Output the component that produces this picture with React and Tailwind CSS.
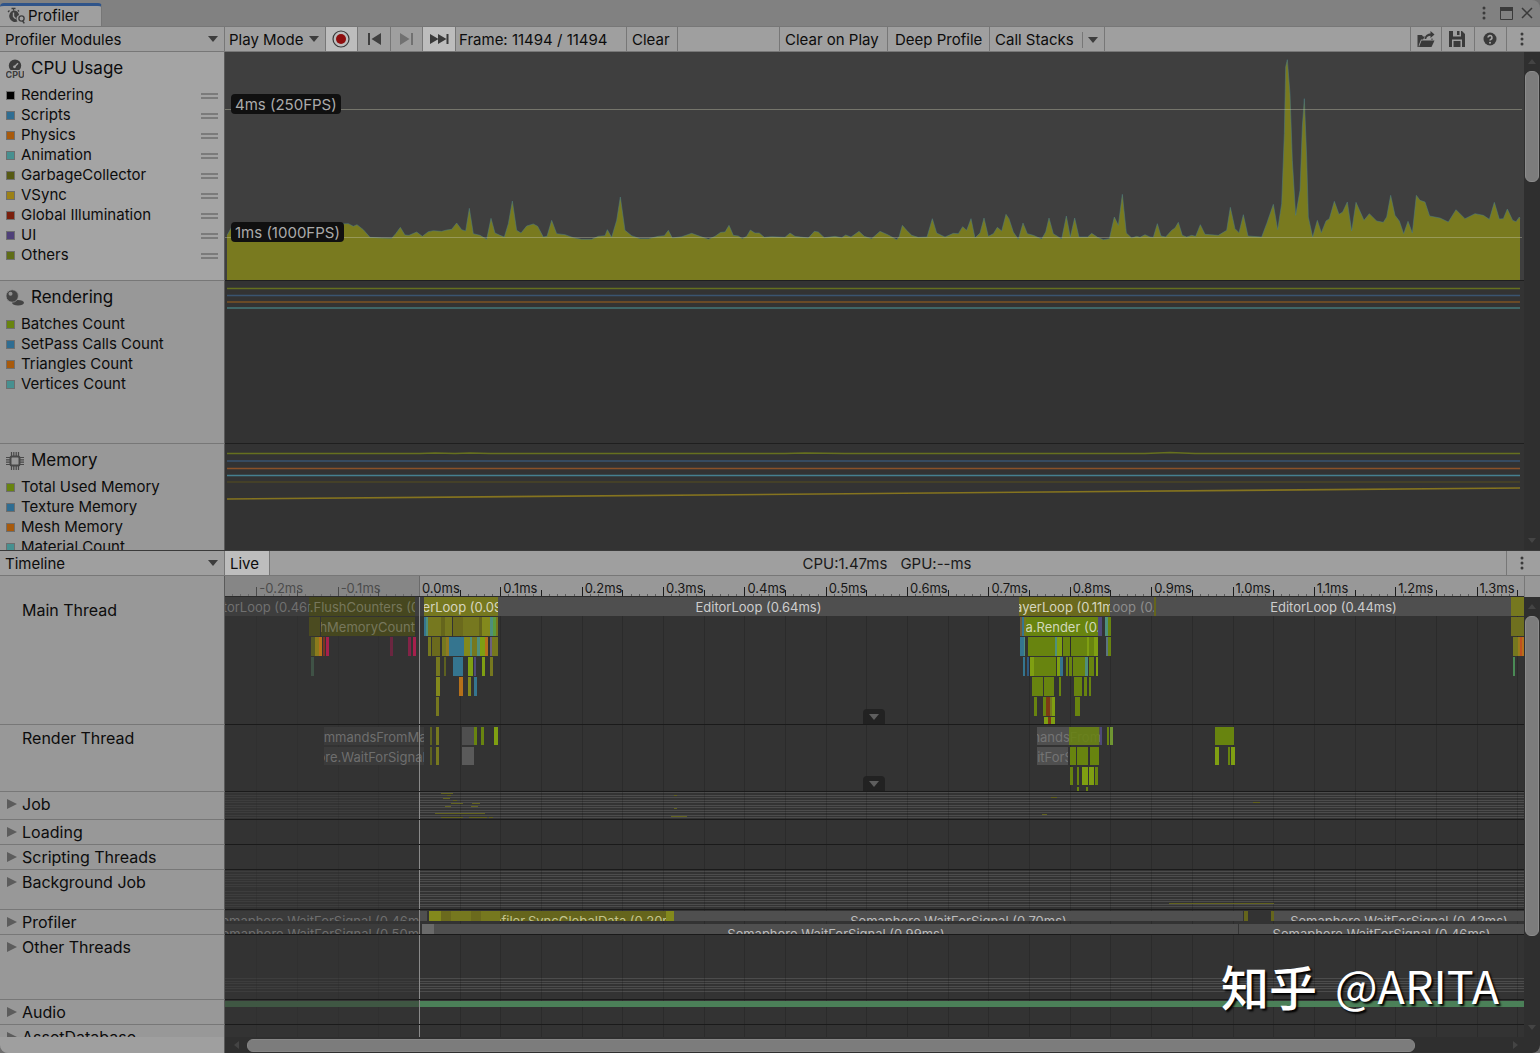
import React from 'react';

const LANE_WIDTH = 1299;
const MS_STEP = 81.35;
const ZERO = 194;

const pct = (value) => `${(value / LANE_WIDTH) * 100}%`;

const C = {
  olive: '#76781f',
  oliveLight: '#83891c',
  oliveDim: '#46471f',
  green: '#68840f',
  lime: '#7f9f12',
  blue: '#35758f',
  teal: '#4f8f7c',
  orange: '#b5701a',
  red: '#7d3a15',
  pink: '#a6204c',
  pinkDim: '#6b2640',
  purple: '#4f4a78',
  gray: '#4f4f4f',
  grayLight: '#5a5a5a',
  grayDim: '#3e3e3e',
};

const cpuLegend = [
  ['Rendering', '#000000'],
  ['Scripts', '#2f6d92'],
  ['Physics', '#a85a0c'],
  ['Animation', '#479090'],
  ['GarbageCollector', '#565a14'],
  ['VSync', '#9c8116'],
  ['Global Illumination', '#7a1f0d'],
  ['UI', '#4f4079'],
  ['Others', '#5f6d17'],
];

const renderingLegend = [
  ['Batches Count', '#68840f'],
  ['SetPass Calls Count', '#2f6d92'],
  ['Triangles Count', '#a85a0c'],
  ['Vertices Count', '#479090'],
];

const memoryLegend = [
  ['Total Used Memory', '#68840f'],
  ['Texture Memory', '#2f6d92'],
  ['Mesh Memory', '#a85a0c'],
  ['Material Count', '#479090'],
];

// Frame times, three units per pixel
const move = (points, dx, dy) => points.map(([x, y]) => [x + dx, y + dy]);

const samples = [
  ...move([
    [6, 165], [20, 140], [100, 136], [370, 130], [385, 138], [396, 133], [415, 148], [435, 171], [470, 173], [500, 174],
    [512, 160], [526, 141], [540, 164], [552, 165], [575, 155], [592, 168], [610, 154], [625, 151], [650, 153], [665, 149],
    [680, 147], [695, 128], [710, 148], [722, 152], [733, 84], [745, 160], [765, 165], [785, 177], [798, 114], [810, 158],
    [825, 165], [838, 170], [850, 130], [862, 62], [875, 150], [888, 158], [905, 137], [925, 131], [938, 138], [955, 170],
    [966, 168], [980, 120], [995, 160], [1020, 163], [1045, 172], [1070, 177], [1100, 177], [1120, 168], [1140, 166],
    [1147, 148], [1160, 171], [1175, 120], [1186, 50], [1200, 150], [1220, 166], [1245, 175], [1270, 175], [1300, 168],
    [1318, 166], [1330, 150], [1342, 173], [1370, 169], [1400, 159], [1425, 168], [1450, 177], [1470, 168], [1487, 156],
  ], 0, 385),
  ...move([
    [0, 155], [12, 135], [25, 165], [40, 167], [52, 175], [65, 168], [76, 149], [90, 158], [103, 158], [118, 171],
    [140, 169], [180, 171], [195, 158], [210, 168], [250, 173], [268, 153], [280, 155], [298, 172], [330, 168], [350, 172],
    [362, 164], [378, 170], [402, 153], [418, 168], [440, 175], [465, 153], [490, 164], [515, 178], [522, 170], [532, 135],
    [545, 150], [560, 165], [580, 171], [606, 170], [622, 115], [635, 158], [660, 170], [685, 159], [700, 160], [713, 139],
    [725, 150], [738, 115], [750, 173], [765, 158], [777, 113], [790, 168], [805, 160], [817, 141], [830, 152], [843, 102],
    [852, 115], [865, 155], [880, 177], [894, 128], [907, 160], [925, 165], [950, 176], [962, 155], [972, 113], [985, 160],
    [1010, 176], [1024, 107], [1036, 170], [1049, 113], [1062, 170], [1088, 170], [1100, 159], [1118, 171], [1135, 178],
    [1153, 175], [1168, 110], [1180, 135], [1192, 42], [1204, 158], [1220, 173], [1235, 168], [1245, 171], [1260, 163],
    [1275, 170], [1285, 171], [1297, 130], [1308, 167], [1322, 170], [1340, 150], [1350, 143], [1360, 126], [1372, 165],
    [1385, 170], [1400, 165], [1412, 168], [1426, 133], [1440, 162], [1480, 165],
  ], 1500, 385),
  ...move([
    [410, 690], [421, 621], [435, 685], [447, 697], [460, 643], [474, 707], [515, 710], [530, 670], [550, 612], [563, 688],
    [575, 610], [583, 400], [587, 200], [592, 178], [600, 280], [607, 480], [617, 645], [630, 570], [637, 380], [643, 295],
    [650, 470], [655, 650], [668, 710], [682, 660], [694, 697], [708, 662], [718, 655], [733, 603], [747, 642], [758, 635],
    [772, 605], [785, 692], [798, 606], [822, 660], [838, 640], [860, 662], [880, 666], [890, 650], [902, 585], [915, 645],
    [928, 662], [941, 700], [954, 663], [967, 698], [979, 585], [990, 600], [1005, 605], [1019, 647], [1050, 653],
    [1075, 665], [1098, 628], [1125, 655], [1155, 640], [1180, 645], [1198, 657], [1213, 606], [1228, 656], [1240, 655],
    [1252, 626], [1268, 660], [1278, 664], [1288, 650], [1290, 655],
  ], 2595, -155),
];

const cpuLine = samples.map((p) => p.join(',')).join(' ');

// [row, start, end, color, label, label color]
const mainBars = [
  [0, 0, 84, C.grayDim, 'EditorLoop (0.46ms)', '#707070'],
  [0, 84, 190, C.oliveDim, 'Profiler.FlushCounters (0.13ms)', '#77775c'],
  [0, 190, 199, C.grayDim],
  [0, 199, 273, C.olive, 'PlayerLoop (0.09ms)', '#d6d6c0'],
  [0, 273, 794, C.gray, 'EditorLoop (0.64ms)', '#cdcdcd'],
  [0, 794, 885, '#6b6a1d', 'PlayerLoop (0.11ms)', '#d6d6c0'],
  [0, 885, 929, C.gray, 'EditorLoop (0.05ms)', '#8c8c8c'],
  [0, 929, 931, '#65651c'],
  [0, 931, 1286, C.gray, 'EditorLoop (0.44ms)', '#cdcdcd'],
  [0, 1286, 1299, C.olive],
  [1, 84, 95, '#4b4b20'],
  [1, 96, 190, C.oliveDim, 'Profiler.FlushMemoryCounters (0.12ms)', '#77775c'],
  [1, 199, 201, C.blue], [1, 201, 203, C.teal], [1, 203, 216, C.olive], [1, 216, 220, '#65651c'], [1, 220, 227, C.olive],
  [1, 228, 238, '#6b6a1d'], [1, 238, 254, C.olive], [1, 254, 257, '#65651c'], [1, 257, 265, C.oliveLight],
  [1, 265, 268, C.teal], [1, 268, 271, '#5c9a3c'], [1, 271, 273, C.olive],
  [1, 795, 797, '#6f5b3a'], [1, 797, 799, C.blue], [1, 799, 801, C.olive],
  [1, 801, 873, C.green, 'Camera.Render (0.09ms)', '#d2d8bb'],
  [1, 873, 877, C.purple], [1, 880, 883, C.teal], [1, 883, 886, C.green],
  [1, 1286, 1299, '#6f701f'],
  [2, 86, 90, '#555a24'], [2, 90, 94, '#8a7a1c'], [2, 94, 97, C.orange], [2, 98, 100, '#7d3322'], [2, 101, 104, C.pink],
  [2, 165, 168, C.pinkDim], [2, 183, 186, '#832347'], [2, 188, 191, C.pink],
  [2, 203, 206, C.olive], [2, 207, 215, '#6b6a1d'], [2, 217, 221, C.olive], [2, 221, 224, '#8f7a22'], [2, 224, 239, C.blue],
  [2, 239, 245, C.oliveLight], [2, 245, 247, C.teal], [2, 247, 252, C.olive], [2, 252, 255, C.teal],
  [2, 255, 260, C.lime], [2, 260, 263, C.orange], [2, 265, 267, '#6c5f80'], [2, 267, 270, C.olive], [2, 270, 273, C.olive],
  [2, 795, 799, C.blue], [2, 799, 800, C.teal], [2, 803, 830, C.green], [2, 830, 832, C.teal], [2, 832, 837, C.lime],
  [2, 838, 845, C.green], [2, 846, 862, C.green], [2, 862, 864, C.lime], [2, 864, 869, C.green], [2, 869, 873, C.lime],
  [2, 881, 883, '#5a7480'], [2, 883, 886, C.green],
  [2, 1288, 1293, C.olive], [2, 1293, 1295, '#9a7a1c'], [2, 1295, 1297, '#c0501f'], [2, 1297, 1299, C.orange],
  [3, 86, 89, '#3f5246'],
  [3, 211, 215, C.olive], [3, 219, 221, '#5d6120'], [3, 228, 238, C.blue], [3, 243, 248, C.lime], [3, 249, 251, C.purple],
  [3, 257, 260, C.lime], [3, 265, 268, C.olive],
  [3, 798, 800, C.blue], [3, 802, 804, '#2f5a80'], [3, 805, 809, C.lime], [3, 809, 831, C.green], [3, 832, 835, C.lime],
  [3, 835, 838, C.blue], [3, 841, 843, C.green], [3, 844, 847, C.green], [3, 848, 860, C.green], [3, 860, 863, C.teal],
  [3, 864, 869, C.green], [3, 871, 873, C.lime],
  [3, 1288, 1290, '#4a8a55'],
  [4, 211, 215, C.oliveLight], [4, 234, 238, C.orange], [4, 243, 246, C.oliveLight], [4, 249, 252, C.blue],
  [4, 807, 818, C.green], [4, 819, 829, C.green], [4, 834, 836, C.green], [4, 849, 857, C.green], [4, 859, 862, C.green],
  [4, 864, 866, C.green],
  [5, 211, 214, C.olive],
  [5, 809, 812, C.green], [5, 818, 821, C.green], [5, 821, 825, C.red], [5, 825, 827, C.olive], [5, 827, 830, C.lime],
  [5, 850, 855, C.green],
  [6, 819, 823, C.lime], [6, 823, 826, C.red], [6, 826, 830, C.lime],
];

const renderBars = [
  [0, 99, 199, '#3b3b3b', 'Gfx.WaitForGfxCommandsFromMainThread (0.12ms)', '#6e6e6e'],
  [1, 99, 199, '#3b3b3b', 'Semaphore.WaitForSignal (0.12ms)', '#6e6e6e'],
  [0, 205, 207, '#5d6120'], [0, 211, 214, C.olive], [0, 237, 249, C.gray], [0, 249, 252, C.green],
  [0, 256, 259, C.green], [0, 269, 273, C.lime],
  [1, 205, 207, '#5d6120'], [1, 211, 214, C.olive], [1, 237, 249, C.grayLight],
  [0, 812, 877, C.gray, 'Gfx.WaitForGfxCommandsFromMainThread (0.08ms)', '#747474'],
  [0, 844, 874, '#68840fd9'], [0, 875, 877, C.purple], [0, 882, 884, C.green], [0, 885, 888, '#6f9632'],
  [1, 812, 843, C.gray, 'Semaphore.WaitForSignal (0.04ms)', '#747474'],
  [1, 845, 851, C.green], [1, 852, 863, C.green], [1, 865, 874, C.green],
  [2, 845, 848, C.green], [2, 852, 854, C.green], [2, 857, 863, C.lime], [2, 864, 869, C.lime], [2, 870, 873, C.green],
  [3, 852, 854, C.green], [3, 861, 863, C.green],
  [0, 990, 1009, C.green], [1, 990, 994, C.lime], [1, 1003, 1005, C.green], [1, 1006, 1010, C.lime],
];

const profilerBars = [
  [0, 0, 194, '#3b3b3b', 'Semaphore.WaitForSignal (0.46ms)', '#6e6e6e'],
  [0, 194, 202, C.gray],
  [0, 204, 216, C.oliveLight], [0, 216, 226, '#6b6a1d'], [0, 226, 246, C.olive], [0, 246, 256, '#6b6a1d'],
  [0, 256, 275, C.olive],
  [0, 275, 441, '#65651c', 'Profiler.SyncGlobalData (0.20ms)', '#c4c48e'],
  [0, 441, 449, C.oliveLight],
  [0, 449, 1018, C.gray, 'Semaphore.WaitForSignal (0.70ms)', '#bdbdbd'],
  [0, 1019, 1023, '#65651c'], [0, 1046, 1049, '#65651c'],
  [0, 1049, 1299, C.gray, 'Semaphore.WaitForSignal (0.42ms)', '#bdbdbd'],
  [1, 0, 194, '#3b3b3b', 'Semaphore.WaitForSignal (0.50ms)', '#6e6e6e'],
  [1, 197, 209, '#6a6a6a'],
  [1, 209, 1013, C.gray, 'Semaphore.WaitForSignal (0.99ms)', '#bdbdbd'],
  [1, 1014, 1299, C.gray, 'Semaphore.WaitForSignal (0.46ms)', '#bdbdbd'],
];

// [top, start, end]
const jobMarks = [
  [1, 216, 228], [3, 222, 226], [6, 218, 225], [8, 228, 232], [11, 226, 238], [11, 247, 255], [14, 220, 226], [14, 246, 253],
  [21, 210, 260], [25, 216, 238], [25, 244, 262], [25, 264, 268], [3, 449, 452], [16, 449, 452], [24, 446, 462],
  [5, 826, 832], [10, 1028, 1035], [22, 817, 822],
];

const ticks = [];
for (let i = -23; i <= 135; i++) ticks.push(i);
const gridTicks = ticks.filter((i) => i % 5 === 0);
const labelTicks = ticks.filter((i) => i % 10 === 0);

const Arrow = ({ className = '' }) => (
  <svg viewBox="0 0 10 6" className={`h-[6px] w-[10px] fill-[#3d3d3d] ${className}`}>
    <path d="M0 0h10L5 6z" />
  </svg>
);

const Dots = () => (
  <svg viewBox="0 0 4 14" className="h-[14px] w-[4px] fill-[#3a3a3a]">
    <circle cx="2" cy="2" r="1.5" />
    <circle cx="2" cy="7" r="1.5" />
    <circle cx="2" cy="12" r="1.5" />
  </svg>
);

const ProfilerIcon = () => (
  <svg viewBox="0 0 18 18" className="h-[18px] w-[18px]">
    <path d="M4.5 .8h4v1.4h-4zM6 2h1v1.500H6z" fill="#3f3f3f" />
    <path d="M6.5 3.200a6 6 0 0 1 5.600 4.800A4 4 0 0 0 10.500 14.500a6 6 0 1 1-4-11.300z" fill="#3f3f3f" />
    <path d="M6.500 5.500v4l2.200 2.200" fill="none" stroke="#a0a0a0" strokeWidth="1.400" />
    <path d="M1 5l1.500-1.500M10.800 3.200l1.300 1.300" stroke="#3f3f3f" strokeWidth="1.300" />
    <circle cx="14.500" cy="11.500" r="2.600" fill="none" stroke="#3f3f3f" strokeWidth="1.400" />
    <path d="M15.500 13.800l1.800 2.600" stroke="#3f3f3f" strokeWidth="1.500" />
  </svg>
);

const CpuIcon = () => (
  <svg viewBox="0 0 18 20" className="h-[20px] w-[18px]">
    <path d="M4.600 11a6.200 6.200 0 1 1 8.800 0z" fill="#3d3d3d" />
    <path d="M8.500 7.800L12 4.200" stroke="#a4a4a4" strokeWidth="1.400" />
    <circle cx="8.500" cy="7.800" r="1.400" fill="#a4a4a4" />
    <text x="9" y="19" textAnchor="middle" fontSize="9" fontWeight="700" fill="#3d3d3d">CPU</text>
  </svg>
);

const RenderingIcon = () => (
  <svg viewBox="0 0 18 18" className="h-[18px] w-[18px]">
    <ellipse cx="12" cy="13.800" rx="6" ry="2.800" fill="#444444" />
    <circle cx="6.200" cy="7" r="6.200" fill="#444444" stroke="#989898" strokeWidth=".8" />
    <circle cx="4.500" cy="4.800" r="2" fill="#909090" />
  </svg>
);

const MemoryIcon = () => (
  <svg viewBox="0 0 18 18" className="h-[18px] w-[18px]" fill="none" stroke="#484848">
    <rect x="4.500" y="4.500" width="9" height="9" rx="1.500" strokeWidth="2" />
    <path d="M5.500 0v4M7.800 0v4M10.200 0v4M12.500 0v4M5.500 14v4M7.800 14v4M10.200 14v4M12.500 14v4M0 5.500h4M0 7.800h4M0 10.200h4M0 12.500h4M14 5.500h4M14 7.800h4M14 10.200h4M14 12.500h4" strokeWidth="1.200" />
  </svg>
);

const ToolButton = ({ label, active, className = '', children }) => (
  <button
    aria-label={label}
    className={`flex h-full shrink-0 items-center justify-center border-r border-[#777777] ${active ? 'bg-[#bdbdbd]' : ''} ${className}`}
  >
    {children}
  </button>
);

const TextButton = ({ active, className = '', children }) => (
  <button className={`flex h-full shrink-0 items-center border-r border-[#777777] pt-[2px] pl-[5px] whitespace-nowrap ${active ? 'bg-[#bdbdbd]' : ''} ${className}`}>
    {children}
  </button>
);

const Dropdown = ({ label, value, arrow = 'right-[6px]', className }) => (
  <div className={`relative flex h-full shrink-0 items-center ${className}`}>
    <select aria-label={label} className="h-full w-full appearance-none pt-[2px] outline-none">
      <option>{value}</option>
    </select>
    <Arrow className={`pointer-events-none absolute ${arrow}`} />
  </div>
);

const Module = ({ title, icon, legend, handles, className = '', children }) => (
  <section className={`flex shrink-0 ${className}`}>
    <div className={`w-[225px] shrink-0 border-r border-b border-r-[#5a5a5a] border-b-[#777777] ${handles ? 'bg-[#a4a4a4]' : 'bg-[#989898]'}`}>
      <h2 className="flex h-[33px] items-center gap-[7px] pl-[6px] text-[17px] text-[#0c0c0c]">
        {icon}
        {title}
      </h2>
      <ul>
        {legend.map(([name, color]) => (
          <li key={name} className="flex h-5 items-center justify-between pr-[6px]">
            <button className="flex items-center gap-[6px] pl-[6px]">
              <span className="h-[9px] w-[9px] border border-[#6e6e6e]" style={{ backgroundColor: color }} />
              {name}
            </button>
            {handles && <span className="mt-[2px] h-[6px] w-[17px] border-y-2 border-[#7b7b7b]" />}
          </li>
        ))}
      </ul>
    </div>
    <div className={`relative min-w-0 flex-1 border-b border-[#1f1f1f] ${handles ? 'bg-[#3f3f3f]' : 'bg-[#333333]'}`}>
      {children}
    </div>
  </section>
);

const FlatLines = ({ lines, children }) => (
  <svg viewBox="0 0 1299 100" preserveAspectRatio="none" className="block h-[100px] w-full">
    {lines.map(([y, color]) => (
      <path key={y} d={`M2 ${y}H1295`} stroke={color} strokeWidth="1.6" />
    ))}
    {children}
  </svg>
);

const Scrollbar = ({ thumb }) => (
  <div className="flex w-[16px] shrink-0 flex-col items-center bg-[#2f2f2f] py-[7px]">
    <svg viewBox="0 0 8 5" className="h-[5px] w-[8px] shrink-0 fill-[#444444]"><path d="M0 5h8L4 0z" /></svg>
    <div className={`mt-[7px] w-[14px] shrink-0 rounded-md border border-[#8c8c8c] bg-[#7c7c7c] ${thumb}`} />
    <svg viewBox="0 0 8 5" className="mt-auto h-[5px] w-[8px] shrink-0 fill-[#444444]"><path d="M0 0h8L4 5z" /></svg>
  </div>
);

const Bars = ({ bars, top = 0, pitch = 20, height = 'h-[19px]' }) =>
  bars.map(([row, start, end, color, label, labelColor]) => (
    <div
      key={`${row}-${start}`}
      className={`absolute flex justify-center overflow-hidden text-[13px] leading-[21px] whitespace-nowrap ${height}`}
      style={{ top: top + row * pitch, left: pct(start), width: pct(end - start), backgroundColor: color, color: labelColor }}
    >
      {label && <span className="shrink-0">{label}</span>}
    </div>
  ));

const Stripes = ({ className }) => (
  <div className={`absolute inset-x-0 bg-[repeating-linear-gradient(to_bottom,#4c4c4c_0px,#4c4c4c_1px,#333333_1px,#333333_3px,#4c4c4c_3px,#4c4c4c_4px,#333333_4px,#333333_5px)] ${className}`} />
);

const Track = ({ name, foldout, className, stripes, more, children }) => (
  <div className={`flex shrink-0 ${className}`}>
    <div className="w-[225px] shrink-0 overflow-hidden border-r border-b border-r-[#5a5a5a] border-b-[#777777] bg-[#989898] text-[16px] text-[#0c0c0c]">
      {foldout ? (
        <button className="flex h-[24px] items-center gap-[5px] pl-[7px]">
          <svg viewBox="0 0 10 10" className="h-[10px] w-[10px] fill-[#5c5c5c]"><path d="M0 0v10l10-5z" /></svg>
          {name}
        </button>
      ) : (
        <div className="flex h-[25px] items-center pl-[22px]">{name}</div>
      )}
    </div>
    <div className="relative min-w-0 flex-1 overflow-hidden border-b border-[#1a1a1a] bg-[#333333]">
      {stripes}
      {gridTicks.map((i) => (
        <div key={i} className="absolute inset-y-0 w-px bg-black/15" style={{ left: pct(ZERO + (i * MS_STEP) / 10) }} />
      ))}
      <div className="absolute inset-y-0 left-0 bg-[#333333]/60" style={{ width: pct(194) }} />
      {children}
      <div className="absolute inset-y-0 w-px bg-[#8a8a8a]" style={{ left: pct(194) }} />
      {more && (
        <button aria-label={`Expand ${name}`} className="absolute bottom-0 left-1/2 -ml-[12px] flex h-[15px] w-[22px] items-center justify-center rounded-t-sm bg-[#222222]">
          <svg viewBox="0 0 10 6" className="h-[6px] w-[10px] fill-[#5e5e5e]"><path d="M0 0h10L5 6z" /></svg>
        </button>
      )}
    </div>
  </div>
);

const Ruler = () => (
  <div className="flex h-[21px] shrink-0 bg-[#989898]">
    <div className="w-[225px] shrink-0 border-r border-[#5a5a5a]" />
    <div className="relative min-w-0 flex-1 overflow-hidden border-b border-[#2b2b2b] text-[13px] text-[#161616]">
      <div className="absolute inset-y-0 left-0 bg-[#868686]" style={{ width: pct(194) }} />
      {ticks.map((i) => (
        <div
          key={i}
          className={`absolute bottom-0 w-px ${i < 0 ? 'bg-[#4a4a4a]' : 'bg-[#1c1c1c]'} ${i % 10 === 0 ? 'h-[9px]' : i % 5 === 0 ? 'h-[6px]' : 'h-[2px] opacity-50'}`}
          style={{ left: pct(ZERO + (i * MS_STEP) / 10) }}
        />
      ))}
      {labelTicks.map((i) => (
        <span
          key={i}
          className={`absolute top-[3px] pl-[3px] leading-[18px] ${i < 0 ? 'text-[#4c4c4c]' : ''}`}
          style={{ left: pct(ZERO + (i * MS_STEP) / 10) }}
        >
          {(i / 100).toFixed(1)}ms
        </span>
      ))}
      <div className="absolute inset-y-0 w-px bg-[#6a6a6a]" style={{ left: pct(194) }} />
    </div>
    <div className="w-[16px] shrink-0 border-l border-[#777777]" />
  </div>
);

const App = () => {
  return (
    <div className="h-screen bg-[#6f6f6f] font-['Inter','Liberation_Sans',sans-serif] text-[15px] text-[#0c0c0c]">
      <div className="relative flex h-full w-full flex-col overflow-hidden rounded-b-lg rounded-tr-lg bg-[#818181]">
        <header className="flex h-[26px] shrink-0 items-end justify-between">
          <div className="flex h-[23px] w-[102px] items-center gap-[3px] rounded-t-sm border-t-[3px] border-r border-t-[#2f548a] border-r-[#777777] bg-[#9f9f9f] pl-[7px]">
            <ProfilerIcon />
            Profiler
          </div>
          <div className="flex h-full items-center gap-[8px] pr-[7px]">
            <button aria-label="Window menu" className="mr-[6px]"><Dots /></button>
            <button aria-label="Maximize">
              <svg viewBox="0 0 13 13" className="h-[13px] w-[13px]"><path d="M.5 1h12v11.500H.5z" fill="none" stroke="#3a3a3a" /><path d="M0 0h13v4H0z" fill="#3a3a3a" /></svg>
            </button>
            <button aria-label="Close">
              <svg viewBox="0 0 12 12" className="h-[12px] w-[12px]" stroke="#3a3a3a" strokeWidth="1.5"><path d="M1 1l10 10M11 1L1 11" /></svg>
            </button>
          </div>
        </header>

        <div className="flex h-[26px] shrink-0 items-center border-y border-[#777777] bg-[#9f9f9f]">
          <Dropdown label="Profiler modules" value="Profiler Modules" className="w-[225px] border-r border-[#777777] pl-[5px]" />
          <Dropdown label="Target" value="Play Mode" className="w-[101px] border-r border-[#777777] pl-[4px]" />
          <ToolButton label="Record" active className="w-[32px] pr-[1px]">
            <svg viewBox="0 0 18 18" className="h-[18px] w-[18px]"><circle cx="9" cy="9" r="8" fill="none" stroke="#3a3a3a" strokeWidth="1.2" /><circle cx="9" cy="9" r="5" fill="#8f0d0d" /></svg>
          </ToolButton>
          <ToolButton label="Previous frame" className="w-[33px]">
            <svg viewBox="0 0 13 12" className="h-[12px] w-[13px] fill-[#3f3f3f]"><path d="M0 0h2v12H0zM13 0v12L3.500 6z" /></svg>
          </ToolButton>
          <ToolButton label="Next frame" className="w-[32px]">
            <svg viewBox="0 0 13 12" className="h-[12px] w-[13px] fill-[#717171]"><path d="M11 0h2v12h-2zM0 0v12l9.500-6z" /></svg>
          </ToolButton>
          <ToolButton label="Current frame" active className="w-[33px]">
            <svg viewBox="0 0 19 10" className="h-[10px] w-[19px] fill-[#3a3a3a]"><path d="M0 0v10l8.500-5zM8 0v10l8.500-5zM16.500 0h2v10h-2z" /></svg>
          </ToolButton>
          <div className="flex h-full w-[171px] shrink-0 items-center border-r border-[#777777] pt-[2px] pl-[3px]">Frame: 11494 / 11494</div>
          <TextButton className="w-[51px]">Clear</TextButton>
          <div className="h-full w-[102px] shrink-0 border-r border-[#777777]" />
          <TextButton className="w-[108px]">Clear on Play</TextButton>
          <TextButton className="w-[102px]"><span className="pl-[2px]">Deep Profile</span></TextButton>
          <TextButton className="w-[115px]">
            <span className="flex-1 text-left">Call Stacks</span>
            <span className="flex h-[16px] items-center border-l border-[#777777] pr-[6px] pl-[5px]"><Arrow /></span>
          </TextButton>
          <div className="h-full flex-1 border-r border-[#777777]" />
          <ToolButton label="Load" className="w-[31px]">
            <svg viewBox="0 0 18 18" className="h-[18px] w-[18px]" fill="#3a3a3a">
              <path d="M.5 5H5l1 1.500h2L6 9.500H4L1.800 15v2H.5z" />
              <path d="M4.500 10.500h13L14.500 17H2z" />
              <path d="M7.500 9c.5-4 3.500-5.500 6-5.500V1L17.500 4.500 13.500 8V5.700c-2 0-3.800 1-4.300 3.300z" />
              <path d="M14.500 8.500h1V10h-1z" />
            </svg>
          </ToolButton>
          <ToolButton label="Save" className="w-[33px] pr-[2px]">
            <svg viewBox="0 0 16 16" className="h-[16px] w-[16px]" fill="#3a3a3a">
              <path fillRule="evenodd" d="M0 0h13l3 3v13H0zM4 0v5.500h8V0h-1.500v4H8V0zM3 8.500V16h10V8.500z" />
              <path d="M4.500 10h7v6h-7z" />
            </svg>
          </ToolButton>
          <ToolButton label="Help" className="w-[32px] pr-[2px]">
            <svg viewBox="0 0 14 14" className="h-[14px] w-[14px]">
              <circle cx="7" cy="7" r="6.500" fill="#3a3a3a" />
              <path d="M5 5.600a2 2 0 1 1 2.800 1.800c-.6.3-.8.600-.8 1.200" fill="none" stroke="#a8a8a8" strokeWidth="1.600" />
              <circle cx="7" cy="10.700" r="1" fill="#a8a8a8" />
            </svg>
          </ToolButton>
          <button aria-label="Options" className="flex h-full w-[33px] items-center justify-center pr-[4px]"><Dots /></button>
        </div>

        <div className="flex min-h-0 flex-[498] overflow-hidden">
          <div className="flex min-w-0 flex-1 flex-col overflow-hidden">
            <Module title="CPU Usage" icon={<CpuIcon />} legend={cpuLegend} handles className="h-[229px]">
              <svg viewBox="0 0 3897 684" preserveAspectRatio="none" className="block h-full w-full">
                <polygon points={`6,684 ${cpuLine} 3885,684`} fill="#797a1f" />
                <polyline points={cpuLine} fill="none" stroke="#4b8088" strokeWidth="3" strokeOpacity=".5" />
                <path d="M0 172.500H3891M0 556.500H3891" stroke="#c8c8b0" strokeOpacity=".4" strokeWidth="3" />
              </svg>
              <span className="absolute top-[42px] left-[6px] h-5 rounded bg-[#101010] px-[4px] leading-[21px] text-[#ababab]">4ms (250FPS)</span>
              <span className="absolute top-[170px] left-[6px] h-5 rounded bg-[#101010] px-[4px] leading-[21px] text-[#ababab]">1ms (1000FPS)</span>
            </Module>
            <Module title="Rendering" icon={<RenderingIcon />} legend={renderingLegend} className="h-[163px]">
              <FlatLines lines={[[7.5, '#66701f'], [14.5, '#3a5470'], [21, '#7d5324'], [27, '#45787a']]} />
            </Module>
            <Module title="Memory" icon={<MemoryIcon />} legend={memoryLegend} className="h-[163px]">
              <FlatLines lines={[[17, '#3a5470'], [24.5, '#8a5128'], [31.5, '#458090'], [38, '#4b4626']]}>
                <path d="M2 9.500H195l15-.5 20 .5 15-.5 20 .5H560l20-.5 40 .5H920l25-1 25 1H1295" fill="none" stroke="#66701f" strokeWidth="1.6" />
                <path d="M2 55L1295 44" stroke="#85741f" strokeWidth="1.6" />
              </FlatLines>
            </Module>
          </div>
          <Scrollbar thumb="h-[111px]" />
        </div>

        <div className="flex h-[26px] shrink-0 items-center border-y border-t-[#3a3a3a] border-b-[#777777] bg-[#9f9f9f]">
          <Dropdown label="View" value="Timeline" className="w-[225px] border-r border-[#777777] pl-[5px]" />
          <TextButton active className="w-[45px]">Live</TextButton>
          <div className="flex flex-1 justify-center gap-[13px] pt-[2px] pr-[2px] text-[#1a1a1a]">
            <span>CPU:1.47ms</span>
            <span>GPU:--ms</span>
          </div>
          <button aria-label="Timeline options" className="flex h-full w-[34px] items-center justify-center border-l border-[#777777] pr-[4px]"><Dots /></button>
        </div>

        <Ruler />

        <div className="flex min-h-0 flex-[440] overflow-hidden">
          <div className="flex min-w-0 flex-1 flex-col overflow-hidden">
            <Track name="Main Thread" className="h-[128px]" more>
              <Bars bars={mainBars} />
            </Track>
            <Track name="Render Thread" className="h-[67px]" more>
              <Bars bars={renderBars} top={2} height="h-[18px]" />
            </Track>
            <Track name="Job" foldout className="h-[28px]" stripes={<Stripes className="inset-y-0" />}>
              {jobMarks.map(([top, start, end]) => (
                <div key={`${top}-${start}`} className="absolute h-px bg-[#62621e]" style={{ top, left: pct(start), width: pct(end - start) }} />
              ))}
            </Track>
            <Track name="Loading" foldout className="h-[25px]" />
            <Track name="Scripting Threads" foldout className="h-[25px]" />
            <Track
              name="Background Job"
              foldout
              className="h-[40px]"
              stripes={<><Stripes className="top-[1px] h-[17px]" /><Stripes className="top-[21px] bottom-0" /></>}
            >
              <div className="absolute top-[33px] h-px bg-[#62621e]" style={{ left: pct(944), width: pct(105) }} />
            </Track>
            <Track name="Profiler" foldout className="h-[25px]">
              <Bars bars={profilerBars} top={1} pitch={13} height="h-[10px]" />
            </Track>
            <Track name="Other Threads" foldout className="h-[65px]" stripes={<Stripes className="top-[43px] h-[15px]" />} />
            <Track name="Audio" foldout className="h-[25px]">
              <div className="absolute top-[1px] left-0 h-[6px] bg-[#3f5743]" style={{ width: pct(194) }} />
              <div className="absolute top-[1px] right-0 h-[6px] bg-[#4b8058]" style={{ left: pct(194) }} />
            </Track>
            <Track name="AssetDatabase" foldout className="h-[25px]" />
          </div>
          <Scrollbar thumb="h-[320px]" />
        </div>

        <div className="flex h-[16px] shrink-0">
          <div className="w-[225px] shrink-0 border-r border-[#5a5a5a] bg-[#9f9f9f]" />
          <div className="flex flex-1 items-center bg-[#2f2f2f] pr-[22px] pl-[9px]">
            <svg viewBox="0 0 5 8" className="h-[8px] w-[5px] fill-[#444444]"><path d="M5 0v8L0 4z" /></svg>
            <div className="ml-[8px] h-[13px] w-[91%] rounded-md border border-[#868686] bg-[#7c7c7c]" />
            <svg viewBox="0 0 5 8" className="ml-auto h-[8px] w-[5px] fill-[#444444]"><path d="M0 0v8l5-4z" /></svg>
          </div>
        </div>

        <div className="pointer-events-none absolute right-[41px] bottom-[33px] flex items-center gap-[18px] font-['Noto_Sans_CJK_SC',sans-serif] text-[45px] leading-[70px] text-white [text-shadow:2px_2px_2px_#000000]">
          <span className="text-[48px] font-medium">知乎</span>
          <span>@ARITA</span>
        </div>
      </div>
    </div>
  );
};

export default App;
